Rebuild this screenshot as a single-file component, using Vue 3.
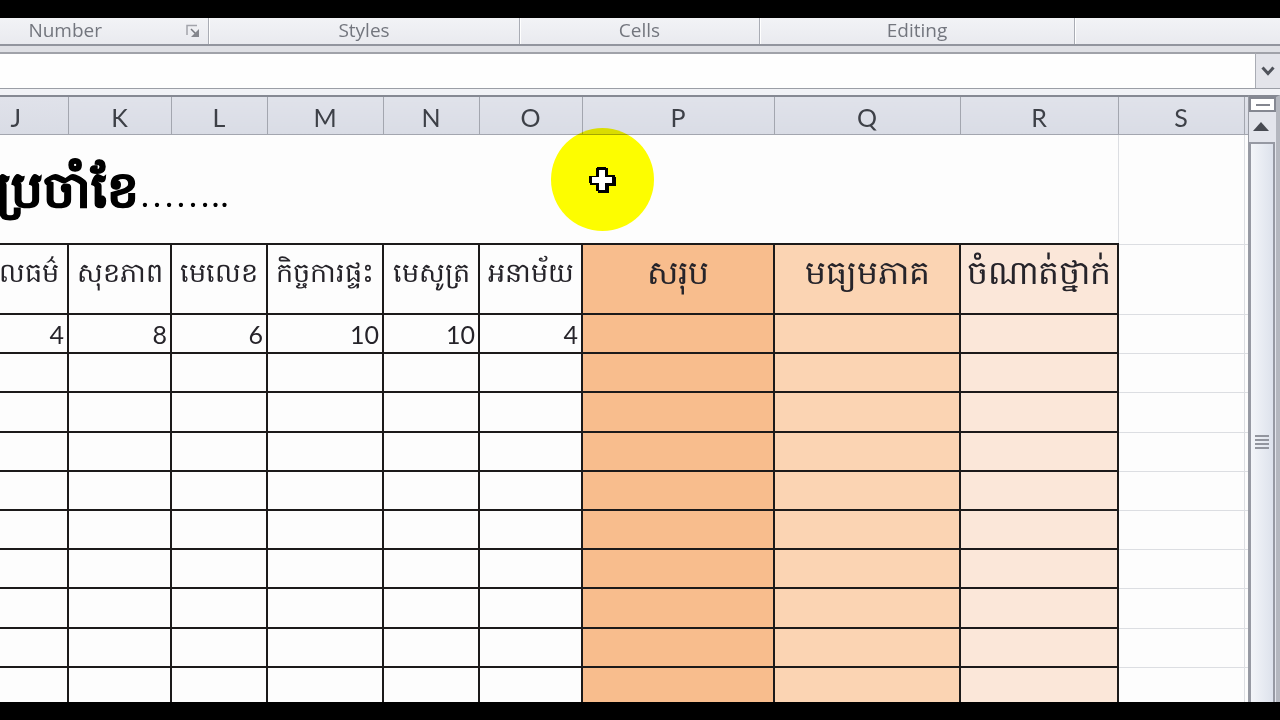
<script setup>
const groups = [
  { name: 'Number', cls: 'g-number', launcher: true },
  { name: 'Styles', cls: 'g-styles' },
  { name: 'Cells', cls: 'g-cells' },
  { name: 'Editing', cls: 'g-editing' },
]
const columns = ['J', 'K', 'L', 'M', 'N', 'O', 'P', 'Q', 'R', 'S']
const fields = [
  { col: 'J', label: 'សីលធម៌', value: 4 },
  { col: 'K', label: 'សុខភាព', value: 8 },
  { col: 'L', label: 'មេលេខ', value: 6 },
  { col: 'M', label: 'កិច្ចការផ្ទះ', value: 10 },
  { col: 'N', label: 'មេសូត្រ', value: 10 },
  { col: 'O', label: 'អនាម័យ', value: 4 },
  { col: 'P', label: 'សរុប', value: '' },
  { col: 'Q', label: 'មធ្យមភាគ', value: '' },
  { col: 'R', label: 'ចំណាត់ថ្នាក់', value: '' },
]
const emptyRows = 9
</script>

<template>
  <div class="screen">
    <header class="ribbon">
      <div v-for="g in groups" :key="g.name" class="group" :class="g.cls">
        <span class="group-name">{{ g.name }}</span>
        <button v-if="g.launcher" class="launcher" aria-label="Number format settings">
          <svg width="14" height="14" viewBox="0 0 14 14">
            <path d="M1 11V1.500H11" fill="none" stroke="#a2a4ab" stroke-width="1.500" />
            <path d="M5 5l5 5" stroke="#777980" stroke-width="1.500" />
            <path d="M13 5v8H5z" fill="#85878e" />
          </svg>
        </button>
      </div>
    </header>

    <div class="formula">
      <input class="formula-input" type="text" aria-label="Formula bar" />
      <button class="expand" aria-label="Expand formula bar">
        <svg width="14" height="10" viewBox="0 0 14 10">
          <path d="M1.500 1.500L7 7.500L12.500 1.500" fill="none" stroke="#50535b" stroke-width="3" />
        </svg>
      </button>
    </div>

    <main class="workspace">
      <div class="sheet">
        <table class="grid">
          <colgroup>
            <col v-for="c in columns" :key="c" :class="'w-' + c" />
            <col class="w-edge" />
          </colgroup>
          <thead>
            <tr>
              <th v-for="c in columns" :key="c" scope="col">{{ c }}</th>
              <th></th>
            </tr>
          </thead>
          <tbody>
            <tr class="title-row">
              <td colspan="9"><div class="title"><b>ប្រចាំខែ</b>……..</div></td>
              <td></td>
              <td></td>
            </tr>
            <tr class="label-row">
              <td v-for="f in fields" :key="f.col" class="cell" :class="'c-' + f.col">{{ f.label }}</td>
              <td></td>
              <td></td>
            </tr>
            <tr class="value-row">
              <td v-for="f in fields" :key="f.col" class="cell" :class="'c-' + f.col">{{ f.value }}</td>
              <td></td>
              <td></td>
            </tr>
            <tr v-for="n in emptyRows" :key="n" class="value-row">
              <td v-for="f in fields" :key="f.col" class="cell" :class="'c-' + f.col"></td>
              <td></td>
              <td></td>
            </tr>
          </tbody>
        </table>
        <div class="halo"></div>
        <svg class="cursor" width="28" height="28" viewBox="0 0 28 28">
          <path d="M9 1H18V2H20V9H27V11H28V20H21V27H10V25H8V19H2V17H1V10H8V2H9Z" fill="#000" />
          <path d="M11 4H17V11H24V17H17V24H11V17H4V11H11Z" fill="#fff" />
        </svg>
      </div>

      <aside class="scroll">
        <button class="split" aria-label="Split window"></button>
        <button class="up" aria-label="Scroll up">
          <svg width="16" height="10" viewBox="0 0 16 10"><path d="M8 0L16 9H0Z" fill="#484b53" /></svg>
        </button>
        <button class="thumb" aria-label="Scroll position">
          <span></span><span></span><span></span><span></span>
        </button>
      </aside>
    </main>
  </div>
</template>

<style>
body {
  background: #000;
}
</style>

<style scoped>
.screen {
  box-sizing: border-box;
  height: 100vh;
  padding: 18px 0;
  display: flex;
  flex-direction: column;
  overflow: hidden;
  background: #000;
  font-family: "Noto Sans", "Open Sans", sans-serif;
}
button {
  margin: 0;
  padding: 0;
  border: 0;
  background: none;
}
svg {
  display: block;
}
.ribbon {
  display: flex;
  height: 26px;
  flex: none;
  background: linear-gradient(#f2f3f6, #e9eaef);
  border-bottom: 2px solid #92959e;
}
.group {
  box-sizing: border-box;
  display: flex;
  align-items: center;
  justify-content: center;
  border-right: 1px solid #a9acb4;
  box-shadow: 1px 0 #fff;
  color: #73767e;
  font-size: 19px;
  line-height: 24px;
}
.group-name {
  padding-bottom: 2px;
  font-family: "Open Sans", sans-serif;
  font-weight: 500;
}
.g-number {
  width: 209px;
  justify-content: flex-end;
  gap: 84px;
  padding-right: 8px;
}
.g-styles { width: 311px; }
.g-cells { width: 240px; }
.g-editing { width: 315px; }

.formula {
  display: flex;
  flex: none;
  height: 36px;
  margin: 0;
  border-top: 6px solid #dfe0e5;
  border-bottom: 1px solid #9b9ea6;
  background: #dfe0e5;
}
.formula-input {
  flex: 1;
  min-width: 0;
  padding: 0 8px;
  border: 0;
  border-top: 2px solid #a0a2a9;
  background: #fefefe;
  font-size: 20px;
}
.expand {
  width: 25px;
  display: flex;
  align-items: center;
  justify-content: center;
  border-top: 2px solid #a0a2a9;
  border-left: 1px solid #a9acb4;
  background: #e3e4ea;
}
.workspace {
  flex: 1;
  min-height: 0;
  display: flex;
  overflow: hidden;
  border-top: 6px solid #f1f2f6;
  background: #fdfdfd;
}
.sheet {
  position: relative;
  flex: 1;
  min-width: 0;
  overflow: hidden;
  border-top: 2px solid #868993;
}
.grid {
  width: calc(100% + 37px);
  margin-left: -37px;
  table-layout: fixed;
  border-collapse: collapse;
}
.w-J { width: 104px; }
.w-K, .w-O { width: 103px; }
.w-L, .w-N { width: 96px; }
.w-M { width: 116px; }
.w-P { width: 192px; }
.w-Q { width: 186px; }
.w-R { width: 158px; }
.w-edge { width: 4px; }

th, td {
  box-sizing: border-box;
  padding: 0;
}
th {
  height: 37px;
  padding-top: 4px;
  background: linear-gradient(#e0e2ea, #d9dce5);
  border-right: 1px solid #a3a6af;
  border-bottom: 1px solid #a3a6af;
  color: #3d4047;
  font: 400 25px/30px Lato, "Noto Sans", sans-serif;
}
th:last-child {
  border-right: 0;
}
td {
  border-right: 1px solid #dcdee2;
  border-bottom: 1px solid #dcdee2;
}
td:last-child {
  border-right: 0;
}
.title-row td {
  height: 110px;
}
.title {
  width: 265px;
  padding-top: 8px;
  text-align: right;
  white-space: nowrap;
  color: #000;
  font-family: "Liberation Serif", serif;
  font-size: 36px;
  line-height: 48px;
}
.title b {
  font-size: 50px;
  -webkit-text-stroke: 1px #000;
}
.cell {
  border: 2px solid #1c1a1a;
  color: #26242a;
  white-space: nowrap;
}
.label-row td {
  height: 70px;
  padding-bottom: 14px;
  text-align: center;
  font-size: 27px;
  line-height: 32px;
}
.label-row .c-P, .label-row .c-Q, .label-row .c-R {
  font-size: 33px;
}
.value-row td {
  height: 39px;
  padding-right: 3px;
  text-align: right;
  font: 400 25px/30px Lato, "Noto Sans", sans-serif;
}
.value-row:nth-child(5n) td {
  height: 40px;
}
.c-P { background: #f8bd8d; }
.c-Q { background: #fbd4b3; }
.c-R { background: #fbe7d9; }

.halo {
  position: absolute;
  left: 551px;
  top: 31px;
  width: 103px;
  height: 103px;
  border-radius: 50%;
  background: #ffff00;
  mix-blend-mode: multiply;
}
.cursor {
  position: absolute;
  left: 588px;
  top: 69px;
}
.scroll {
  box-sizing: border-box;
  width: 32px;
  flex: none;
  display: flex;
  flex-direction: column;
  align-items: flex-start;
  border-top: 2px solid #868993;
  border-left: 1px solid #989ba4;
  border-right: 4px solid #b4b7bf;
  background: #e3e5ec;
}
.split {
  box-sizing: border-box;
  flex: none;
  width: 27px;
  height: 15px;
  border: 2px solid #858892;
  background: linear-gradient(#83868f, #83868f) center / 14px 2px no-repeat #fff;
}
.up {
  flex: none;
  width: 24px;
  height: 30px;
  display: flex;
  align-items: center;
  justify-content: center;
}
.thumb {
  box-sizing: border-box;
  flex: none;
  width: 26px;
  height: 600px;
  display: flex;
  flex-direction: column;
  align-items: center;
  justify-content: center;
  gap: 2px;
  border: 2px solid #9699a3;
  background: linear-gradient(90deg, #f3f5f9, #dde2ec);
}
.thumb span {
  width: 14px;
  height: 2px;
  background: #92959e;
}
</style>
